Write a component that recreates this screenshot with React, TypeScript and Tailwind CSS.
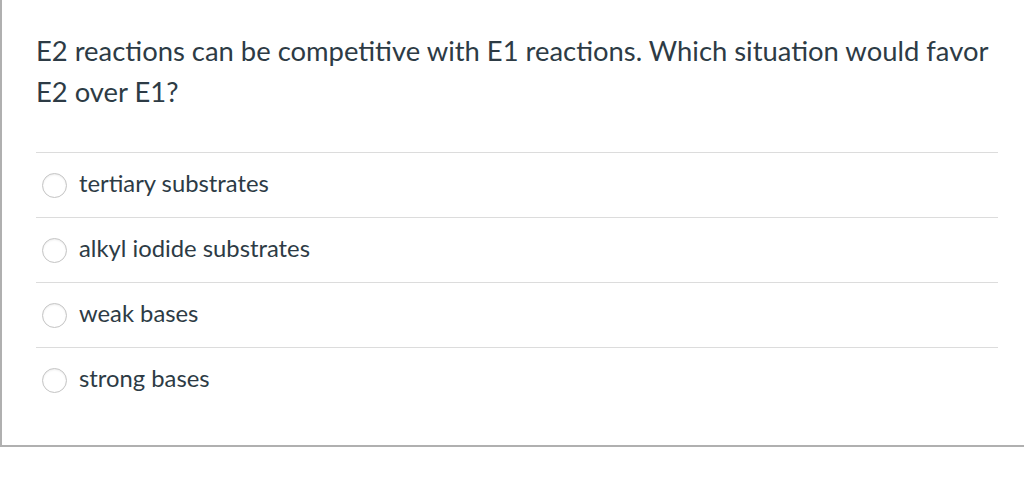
import React from "react";

const options = [
  "tertiary substrates",
  "alkyl iodide substrates",
  "weak bases",
  "strong bases",
];

export default function App() {
  return (
    <div className="w-[1024px] h-[498px] bg-white" style={{ fontFamily: "Lato, 'Noto Sans', sans-serif" }}>
      <div className="h-[447px] border-l-2 border-b-2 border-[#b0b0b0] pl-[34px] pr-[26px] pt-[30px]">
        <p className="text-[27.4px] leading-[41px] text-[#2d3b45] pr-[4px]">
          E2 reactions can be competitive with E1 reactions. Which situation would favor E2 over E1?
        </p>
        <div className="mt-[40px] border-t border-[#dcdcdc]">
          {options.map((o, i) => (
            <div
              key={o}
              className={`flex items-center h-[65px] ${i < options.length - 1 ? "border-b border-[#dcdcdc]" : ""}`}
            >
              <span className="ml-[6px] w-[25px] h-[25px] rounded-full border border-[#c4c4c4] bg-white shadow-[inset_0_1px_2px_rgba(0,0,0,0.08)]" />
              <span className="ml-[12px] text-[23.8px] leading-[30px] text-[#2d3b45] -mt-[5px]">{o}</span>
            </div>
          ))}
        </div>
      </div>
    </div>
  );
}
